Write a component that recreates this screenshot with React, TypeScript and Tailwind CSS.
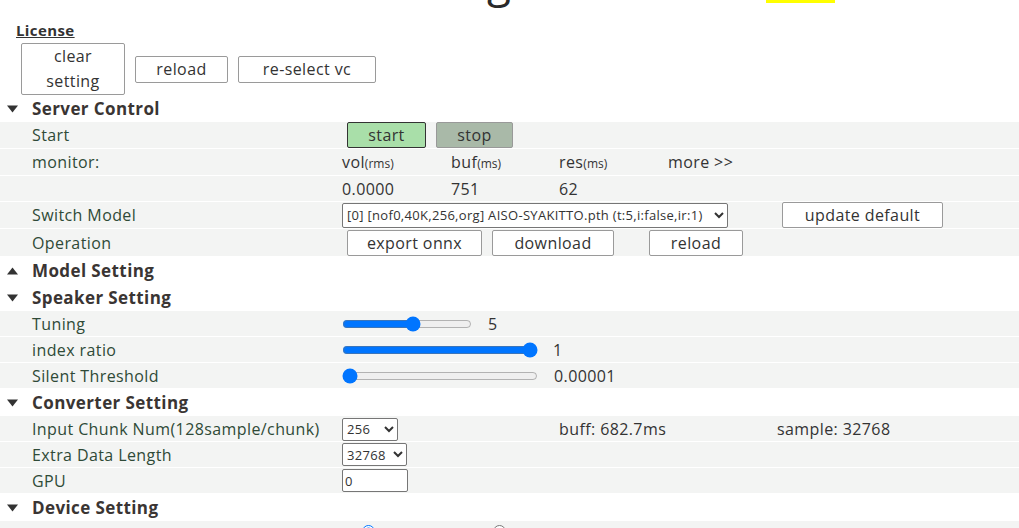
import React from "react";

const Tri = ({ up = false }: { up?: boolean }) => (
  <svg width="11" height="8" viewBox="0 0 11 8" className="shrink-0">
    {up ? <polygon points="5.5,0.5 11,7.5 0,7.5" fill="#333" /> : <polygon points="0,0.5 11,0.5 5.5,7.5" fill="#333" />}
  </svg>
);

const Heading = ({ title, up = false }: { title: string; up?: boolean }) => (
  <div className="flex items-center h-[27px] pl-[7px]">
    <Tri up={up} />
    <span className="ml-[14px] text-[17px] font-bold tracking-[0.4px] text-[#3a3533]">{title}</span>
  </div>
);

const Row = ({ label, children, h = "h-[26px]" }: { label: string; children?: React.ReactNode; h?: string }) => (
  <div className={`flex items-center ${h} bg-[#f3f4f3] border-b border-white pl-[32px]`}>
    <div className="w-[310px] shrink-0 text-[#2f4a37]">{label}</div>
    {children}
  </div>
);

const Btn = ({ children, className = "" }: { children: React.ReactNode; className?: string }) => (
  <button className={`border border-[#9a9a9a] rounded-[2px] bg-white text-[#333] text-[16px] tracking-[0.4px] leading-[25px] ${className}`}>{children}</button>
);

const sel = "border border-[#767676] rounded-[2px] bg-white text-[13px] tracking-[0.3px] text-[#333]";

export default function App() {
  return (
    <div className="w-[1019px] h-[528px] overflow-hidden bg-white font-['Open_Sans',sans-serif] text-[16px] tracking-[0.4px] text-[#333]">
      <div className="flex h-[10px] overflow-hidden">
        <div className="w-[766px] shrink-0 pl-[487px]">
          <div className="-mt-[42px] text-[44px] leading-[44px] text-[#2a2a2a]">g</div>
        </div>
        <div className="w-[69px] h-[3px] bg-[#ffff00]" />
      </div>
      <div className="pl-[16px] mt-[10px] leading-[20px] text-[15px] font-bold underline text-[#333]">License</div>
      <div className="flex items-center pl-[21px] mt-[3px] gap-[10px]">
        <Btn className="w-[104px] h-[52px] px-[4px]">
          <span className="block">clear</span>
          <span className="block">setting</span>
        </Btn>
        <Btn className="w-[93px] h-[27px]">reload</Btn>
        <Btn className="w-[138px] h-[27px]">re-select vc</Btn>
      </div>
      <Heading title="Server Control" />
      <Row label="Start" h="h-[27px]">
        <button className="ml-[5px] w-[79px] h-[26px] bg-[#a9dfa9] border border-[#333] rounded-[2px] text-[#333]">start</button>
        <button className="ml-[10px] w-[77px] h-[26px] bg-[#a9b9a8] border border-[#999] rounded-[2px] text-[#333]">stop</button>
      </Row>
      <Row label="monitor:" h="h-[27px]">
        <div className="w-[109px]">vol<span className="text-[12px] tracking-normal">(rms)</span></div>
        <div className="w-[108px]">buf<span className="text-[12px] tracking-normal">(ms)</span></div>
        <div className="w-[109px]">res<span className="text-[12px] tracking-normal">(ms)</span></div>
        <div className="w-[109px]">more &gt;&gt;</div>
      </Row>
      <Row label="" h="h-[26px]">
        <div className="w-[109px]">0.0000</div>
        <div className="w-[108px]">751</div>
        <div className="w-[109px]">62</div>
      </Row>
      <Row label="Switch Model" h="h-[27px]">
        <select className={`w-[386px] h-[25px] ${sel}`} defaultValue="0">
          <option value="0">[0] [nof0,40K,256,org] AISO-SYAKITTO.pth (t:5,i:false,ir:1)</option>
        </select>
        <Btn className="ml-[54px] w-[161px] h-[26px]">update default</Btn>
      </Row>
      <Row label="Operation" h="h-[28px]">
        <Btn className="ml-[5px] w-[135px] h-[26px]">export onnx</Btn>
        <Btn className="ml-[10px] w-[122px] h-[26px]">download</Btn>
        <Btn className="ml-[35px] w-[94px] h-[26px]">reload</Btn>
      </Row>
      <Heading title="Model Setting" up />
      <Heading title="Speaker Setting" />
      <Row label="Tuning">
        <input type="range" min={-50} max={50} defaultValue={5} className="w-[130px] m-0 accent-[#0075ff]" />
        <span className="ml-[16px]">5</span>
      </Row>
      <Row label="index ratio">
        <input type="range" min={0} max={1} step={0.1} defaultValue={1} className="w-[196px] m-0 accent-[#0075ff]" />
        <span className="ml-[15px]">1</span>
      </Row>
      <Row label="Silent Threshold">
        <input type="range" min={0} max={0.05} step={0.00001} defaultValue={0.00001} className="w-[196px] m-0 accent-[#0075ff]" />
        <span className="ml-[16px]">0.00001</span>
      </Row>
      <Heading title="Converter Setting" />
      <Row label="Input Chunk Num(128sample/chunk)">
        <div className="w-[217px]">
          <select className={`w-[56px] h-[23px] ${sel}`} defaultValue="256">
            <option value="256">256</option>
          </select>
        </div>
        <div className="w-[218px]">buff: 682.7ms</div>
        <div>sample: 32768</div>
      </Row>
      <Row label="Extra Data Length">
        <select className={`w-[65px] h-[23px] ${sel}`} defaultValue="32768">
          <option value="32768">32768</option>
        </select>
      </Row>
      <Row label="GPU">
        <input type="text" defaultValue="0" className={`w-[66px] h-[23px] px-[2px] ${sel}`} />
      </Row>
      <Heading title="Device Setting" />
      <div className="flex items-start h-[26px] bg-[#f3f4f3] pl-[342px] pt-[4px]">
        <input type="radio" name="ai" defaultChecked className="ml-[20px] accent-[#0075ff]" />
        <input type="radio" name="ai" className="ml-[118px]" />
      </div>
    </div>
  );
}
